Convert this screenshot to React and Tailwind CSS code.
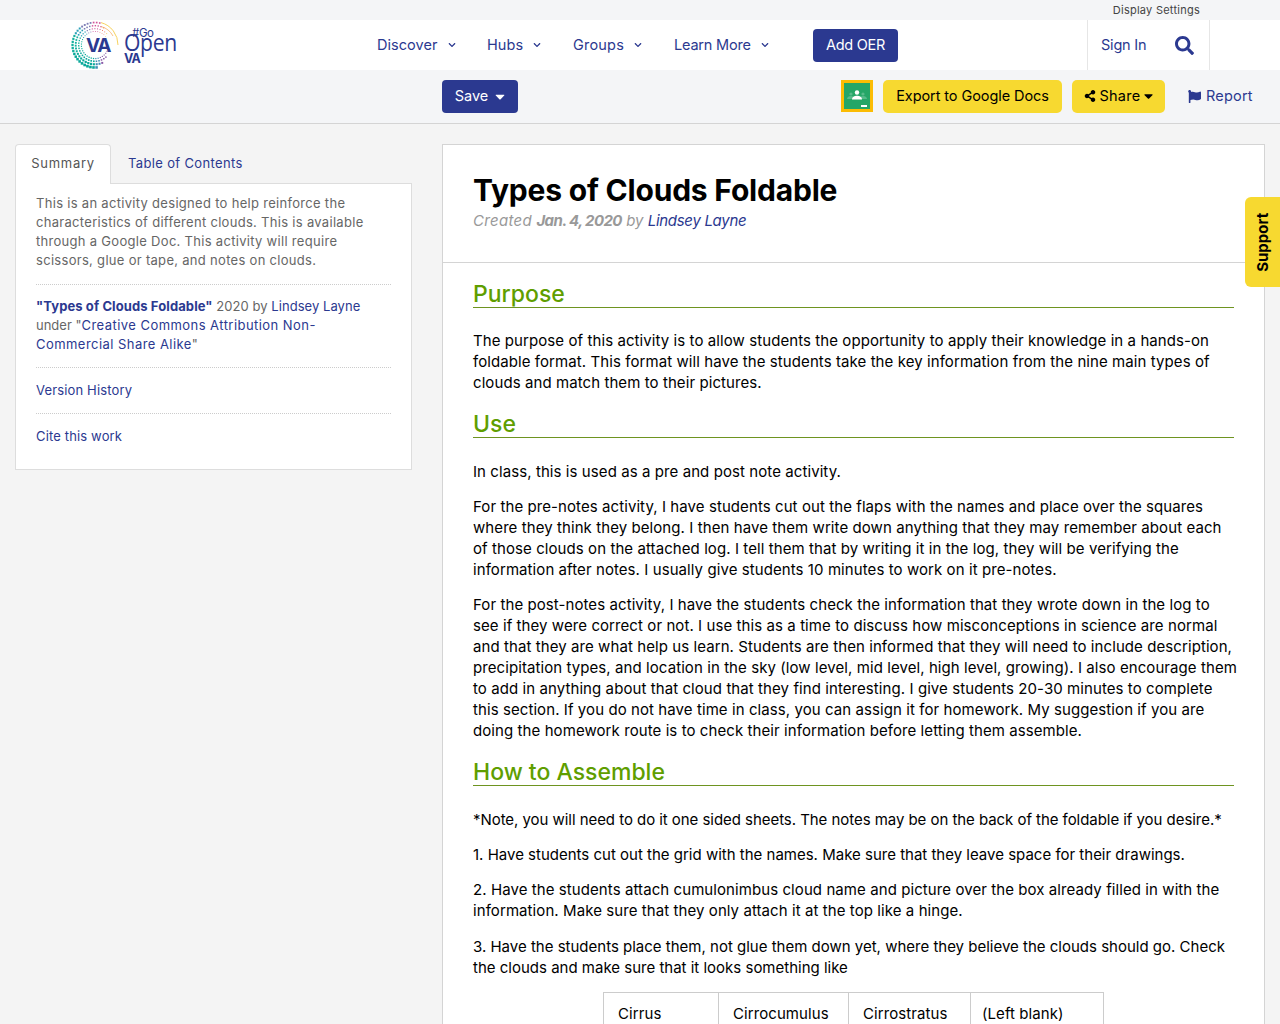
import { FaSearch, FaShareAlt, FaFlag, FaCaretDown, FaChevronDown } from 'react-icons/fa';

const font = { fontFamily: 'Inter, sans-serif' };

// dots for the logo ring: a is clockwise from the bottom, dots get smaller towards the end
function logoDots() {
  const dots = [];
  const rings = [
    { r: 22.5, size: 2.7, from: -4, to: 200, n: 26 },
    { r: 19.3, size: 2.2, from: -22, to: 215, n: 28 },
    { r: 16.3, size: 1.7, from: -42, to: 235, n: 30 },
    { r: 13.6, size: 1.3, from: -62, to: 250, n: 32 },
  ];
  const colorAt = (a) => {
    if (a < -20) return '#8a5ba8';
    if (a < 0) return '#3f8fb5';
    if (a < 70) return '#0aa89a';
    if (a < 115) return '#14b09e';
    if (a < 145) return '#2aa0b8';
    if (a < 170) return '#7d7db5';
    if (a < 200) return '#d0559a';
    if (a < 225) return '#ef7d6a';
    return '#f7c64f';
  };
  rings.forEach((ring) => {
    for (let i = 0; i < ring.n; i++) {
      const a = ring.from + ((ring.to - ring.from) * i) / ring.n;
      const x = 24 + ring.r * Math.cos((a * Math.PI) / 180 + Math.PI / 2);
      const y = 24 + ring.r * Math.sin((a * Math.PI) / 180 + Math.PI / 2);
      const s = ring.size * (1 - (Math.abs(a - 20) / 240) * 0.55);
      dots.push(<rect key={ring.r + '-' + i} x={x - s / 2} y={y - s / 2} width={s} height={s} fill={colorAt(a)} />);
    }
  });
  return dots;
}

function Logo() {
  return (
    <div className="flex items-center w-[105px] h-[50px]">
      <div className="relative w-[48px] h-[48px] shrink-0">
        <svg width="48" height="48" viewBox="0 0 48 48">
          {logoDots()}
          <path d="M30 1.6 A23 23 0 0 1 47 24" fill="none" stroke="#f7d35f" strokeWidth="1" />
          <path d="M30 5.5 A19.3 19.3 0 0 1 42 15" fill="none" stroke="#f6b26b" strokeWidth="0.8" />
        </svg>
        <span className="absolute left-[15px] top-[15px] text-[19px] leading-[19px] font-bold tracking-[-1.5px] text-[#2b3990]">VA</span>
      </div>
      <div className="relative ml-[5px] w-[53px] h-[46px] text-[#2b3990]">
        <span className="absolute left-[8px] top-[5px] text-[11.5px] leading-[12px] tracking-[-0.4px]">#Go</span>
        <span className="absolute left-0 top-[7px] text-[24px] leading-[26px] tracking-[-0.4px] scale-x-[0.88] origin-left" style={{ fontFamily: 'Open Sans, sans-serif' }}>Open</span>
        <span className="absolute left-0 top-[30px] text-[12.5px] leading-[13px] font-bold tracking-[-0.8px]">VA</span>
      </div>
    </div>
  );
}

function NavItem({ label, className, tracking = 'tracking-[0.05px]' }) {
  return (
    <a className={'flex items-center text-[14.5px] text-[#2b3990] ' + tracking + ' ' + className}>
      {label}
      <FaChevronDown className="ml-[10px] w-[8px] h-[8px]" />
    </a>
  );
}

function ClassroomIcon() {
  return (
    <div className="w-[32px] h-[32px] border-[3px] border-[#fbbc04]">
      <svg width="26" height="26" viewBox="0 0 26 26" className="block">
        <rect width="26" height="26" fill="#25a667" />
        <circle cx="7" cy="11" r="1.6" fill="#57bb8a" />
        <circle cx="19" cy="11" r="1.6" fill="#57bb8a" />
        <path d="M3 16c0-2 2-3 4-3s4 1 4 3zM15 16c0-2 2-3 4-3s4 1 4 3z" fill="#57bb8a" />
        <circle cx="13" cy="9.5" r="2.2" fill="#fff" />
        <path d="M8 16.5c0-2.6 2.4-3.8 5-3.8s5 1.2 5 3.8z" fill="#fff" />
        <rect x="17" y="22" width="6" height="2" fill="#fff" />
      </svg>
    </div>
  );
}

function SectionTitle({ children, className }) {
  return (
    <h2 className={'pt-[2px] text-[#5f9e00] text-[23px] leading-[25px] font-medium border-b border-[#6e9420] ' + className}>
      {children}
    </h2>
  );
}

function Para({ children, className = '', tracking = 'tracking-[0.08px]' }) {
  return <p className={'text-[15px] leading-[21px] text-black whitespace-nowrap ' + tracking + ' ' + className}>{children}</p>;
}

function Cell({ children, className }) {
  return <td className={'border border-[#cccccc] align-top text-[15px] leading-[21px] tracking-[0.08px] py-[10px] ' + className}>{children}</td>;
}

export default function App() {
  return (
    <div className="h-[1024px] overflow-hidden relative bg-[#f4f4f4]" style={font}>
      <div className="h-[20px] bg-[#f4f5f7] flex justify-end items-center pr-[80px] text-[11px] tracking-[0.25px] text-[#444]">
        Display Settings
      </div>

      <header className="h-[50px] bg-white flex items-center pl-[71px]">
        <Logo />
        <nav className="flex items-center ml-[201px]">
          <NavItem label="Discover" className="w-[110px]" />
          <NavItem label="Hubs" className="w-[86px]" />
          <NavItem label="Groups" className="w-[101px]" tracking="tracking-[0.2px]" />
          <NavItem label="Learn More" className="w-[139px]" tracking="tracking-[-0.2px]" />
          <a className="w-[85px] h-[33px] rounded-[4px] bg-[#2b3990] text-white text-[14.5px] tracking-[-0.25px] flex items-center justify-center">Add OER</a>
        </nav>
        <div className="ml-[189px] w-[123px] h-[50px] border-x border-[#e6e6e6] flex items-center pl-[13px] text-[#2b3990]">
          <a className="w-[46px] text-[14.5px] tracking-[-0.2px]">Sign In</a>
          <FaSearch className="ml-[28px] w-[19px] h-[19px]" />
        </div>
      </header>

      <div className="h-[54px] bg-[#f4f5f7] border-b border-[#d4d4d4] flex items-start pt-[10px] pl-[442px]">
        <button className="w-[76px] h-[33px] pb-[1px] rounded-[4px] bg-[#2b3990] text-white text-[14.5px] flex items-center justify-center">
          Save <FaCaretDown className="ml-[7px] w-[10px] h-[15px]" />
        </button>
        <div className="ml-[323px] flex items-start">
          <ClassroomIcon />
          <button className="ml-[10px] w-[179px] h-[33px] pb-[1px] rounded-[5px] bg-[#f7d930] text-black text-[14.5px] tracking-[-0.08px]">Export to Google Docs</button>
          <button className="ml-[10px] w-[93px] h-[33px] pb-[1px] rounded-[5px] bg-[#f7d930] text-black text-[14.5px] tracking-[0.3px] flex items-center justify-center">
            <FaShareAlt className="w-[12px] h-[12px] mr-[3px]" />Share<FaCaretDown className="ml-[3px] w-[9px] h-[14px]" />
          </button>
          <a className="ml-[23px] h-[33px] pb-[1px] flex items-center text-[#2b3990] text-[14.5px] tracking-[0.2px]">
            <FaFlag className="w-[13px] h-[13px] mr-[5px]" />Report
          </a>
        </div>
      </div>

      <div className="flex items-start pt-[20px] pl-[15px]">
        <aside className="w-[397px] shrink-0">
          <div className="flex h-[40px]">
            <div className="w-[96px] h-[40px] pb-[1px] bg-white border border-b-0 border-[#dddddd] rounded-t-[4px] flex items-center justify-center text-[13px] tracking-[0.7px] text-[#555] relative z-10">Summary</div>
            <div className="ml-[17px] flex items-center text-[13px] tracking-[0.35px] text-[#2b3990]">Table of Contents</div>
          </div>
          <div className="bg-white border border-[#dddddd] h-[287px] px-[20px] pt-[10px] text-[13px] leading-[19px] tracking-[0.3px] text-[#666] -mt-[1px]">
            <p className="pb-[14px] border-b border-dotted border-[#cccccc] whitespace-nowrap">
              This is an activity designed to help reinforce the<br />
              characteristics of different clouds. This is available<br />
              through a Google Doc. This activity will require<br />
              scissors, glue or tape, and notes on clouds.
            </p>
            <p className="pt-[12px] pb-[13px] border-b border-dotted border-[#cccccc] whitespace-nowrap">
              <a className="font-bold tracking-[0.1px] text-[#2b3990]">"Types of Clouds Foldable"</a>
              <span className="tracking-[0.05px]"> 2020 by </span>
              <a className="tracking-[0.05px] text-[#2b3990]">Lindsey Layne</a><br />
              <span className="tracking-[0px]">under "</span><a className="tracking-[0.45px] text-[#2b3990]">Creative Commons Attribution Non-<br />Commercial Share Alike</a>"
            </p>
            <p className="pt-[13px] pb-[13px] border-b border-dotted border-[#cccccc] tracking-[0.15px] text-[#2b3990]">Version History</p>
            <p className="pt-[13px] tracking-[0.15px] text-[#2b3990]">Cite this work</p>
          </div>
        </aside>

        <main className="ml-[30px] w-[823px] shrink-0 bg-white border border-[#d4d4d4]">
          <div className="h-[118px] px-[30px] pt-[27px] border-b border-[#d4d4d4]">
            <h1 className="text-[30px] leading-[36px] font-bold tracking-[-0.2px] text-black">Types of Clouds Foldable</h1>
            <div className="mt-[2px] text-[15px] leading-[21px] tracking-[0.3px] italic text-[#999]">
              Created <b className="tracking-[-0.6px]">Jan. 4, 2020</b> <span className="tracking-[-0.2px]">by</span> <a className="tracking-[-0.3px] text-[#2b3990]">Lindsey Layne</a>
            </div>
          </div>
          <div className="px-[30px] pt-[17px] flex flex-col">
            <SectionTitle className="mb-[22px]">Purpose</SectionTitle>
            <Para>
              The purpose of this activity is to allow students the opportunity to apply their knowledge in a hands-on<br />
              foldable format. This format will have the students take the key information from the nine main types of<br />
              clouds and match them to their pictures.
            </Para>
            <SectionTitle className="mt-[17px] mb-[23px]">Use</SectionTitle>
            <Para className="mb-[14px]">In class, this is used as a pre and post note activity.</Para>
            <Para className="mb-[14px]">
              For the pre-notes activity, I have students cut out the flaps with the names and place over the squares<br />
              where they think they belong. I then have them write down anything that they may remember about each<br />
              of those clouds on the attached log. I tell them that by writing it in the log, they will be verifying the<br />
              information after notes. I usually give students 10 minutes to work on it pre-notes.
            </Para>
            <Para>
              For the post-notes activity, I have the students check the information that they wrote down in the log to<br />
              see if they were correct or not. I use this as a time to discuss how misconceptions in science are normal<br />
              and that they are what help us learn. Students are then informed that they will need to include description,<br />
              precipitation types, and location in the sky (low level, mid level, high level, growing). I also encourage them<br />
              to add in anything about that cloud that they find interesting. I give students 20-30 minutes to complete<br />
              this section. If you do not have time in class, you can assign it for homework. My suggestion if you are<br />
              doing the homework route is to check their information before letting them assemble.
            </Para>
            <SectionTitle className="mt-[17px] mb-[23px]">How to Assemble</SectionTitle>
            <Para className="mb-[14px]" tracking="tracking-[-0.05px]">*Note, you will need to do it one sided sheets. The notes may be on the back of the foldable if you desire.*</Para>
            <Para className="mb-[14px]" tracking="tracking-[0px]">1. Have students cut out the grid with the names. Make sure that they leave space for their drawings.</Para>
            <Para className="mb-[15px]">
              2. Have the students attach cumulonimbus cloud name and picture over the box already filled in with the<br />
              information. Make sure that they only attach it at the top like a hinge.
            </Para>
            <Para className="mb-[14px]" tracking="tracking-[0px]">
              3. Have the students place them, not glue them down yet, where they believe the clouds should go. Check<br />
              the clouds and make sure that it looks something like
            </Para>
            <table className="ml-[130px] w-[501px] border-collapse">
              <tbody>
                <tr>
                  <Cell className="w-[115px] pl-[14px]">Cirrus</Cell>
                  <Cell className="w-[130px] pl-[14px]">Cirrocumulus</Cell>
                  <Cell className="w-[122px] pl-[14px]">Cirrostratus</Cell>
                  <Cell className="pl-[11px]">(Left blank)</Cell>
                </tr>
              </tbody>
            </table>
          </div>
        </main>
      </div>

      <div className="absolute left-[1245px] top-[197px] w-[35px] h-[90px] pl-[3px] bg-[#f7d930] rounded-l-[6px] flex items-center justify-center">
        <span className="block -rotate-90 whitespace-nowrap text-[15px] font-bold text-black">Support</span>
      </div>
    </div>
  );
}
